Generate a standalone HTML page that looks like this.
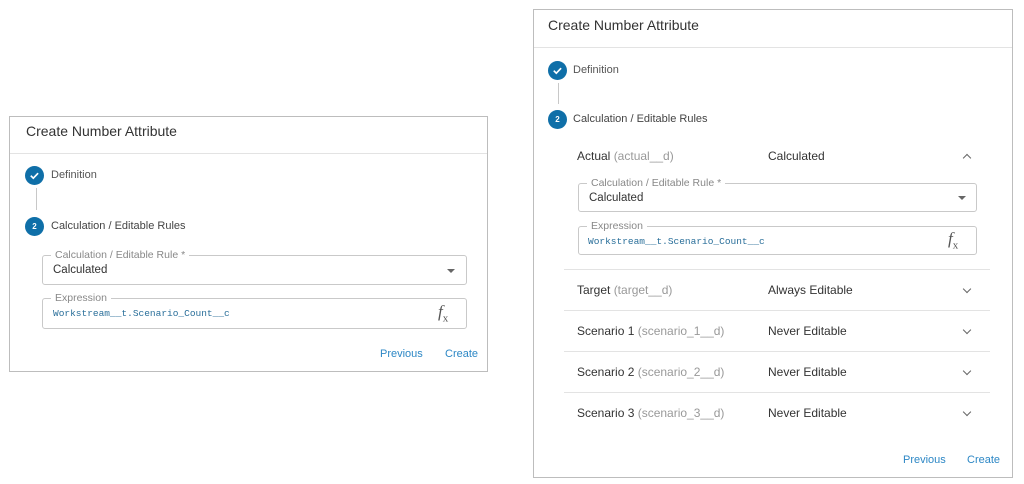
<!DOCTYPE html>
<html><head><meta charset="utf-8"><style>
body{margin:0;width:1024px;height:484px;background:#fff;position:relative;overflow:hidden;font-family:"Liberation Sans",sans-serif;color:#333}
.a{position:absolute;white-space:nowrap;line-height:16px}
.box{position:absolute;border:1px solid #bdbdbd;background:#fff;box-sizing:border-box}
.hr{position:absolute;height:1px;background:#e3e3e3}
.c{position:absolute;width:19px;height:19px;border-radius:50%;background:#0f6fa8;color:#fff;font-size:8px;text-align:center;line-height:19px;font-weight:bold}
.vl{position:absolute;width:1px;background:#c8c8c8}
.fld{position:absolute;border:1px solid #c9c9c9;border-radius:3px;box-sizing:border-box}
.lbl{position:absolute;top:-8px;left:8px;background:#fff;padding:0 4px;font-size:10.5px;color:#888;line-height:14px}
.mono{font-family:"Liberation Mono",monospace;font-size:9.5px;color:#2a6f9a}
.blue{color:#2c87c5;font-size:11px}
.fx{position:absolute;font-family:"Liberation Serif",serif;font-style:italic;font-size:17px;color:#555}
.gr{color:#999}
.chev{position:absolute;width:5px;height:5px;border-right:1.4px solid #666;border-bottom:1.4px solid #666}
.tri{position:absolute;width:0;height:0;border-left:4px solid transparent;border-right:4px solid transparent;border-top:4px solid #666}
</style></head><body>

<!-- Left panel -->
<div class="box" style="left:9px;top:116px;width:479px;height:256px"></div>
<div class="hr" style="left:10px;top:153px;width:477px"></div>
<div class="a" style="left:26px;top:123px;font-size:14px">Create Number Attribute</div>
<div class="c" style="left:25px;top:166px"><svg width="19" height="19"><path d="M5.8 9.7l2.5 2.5 4.8-5" stroke="#fff" stroke-width="1.7" fill="none"/></svg></div>
<div class="a" style="left:51px;top:167px;font-size:11px;color:#555">Definition</div>
<div class="vl" style="left:36px;top:188px;height:22px"></div>
<div class="c" style="left:25px;top:217px">2</div>
<div class="a" style="left:51px;top:218px;font-size:11px;color:#444">Calculation / Editable Rules</div>
<div class="fld" style="left:42px;top:255px;width:425px;height:30px"><div class="lbl">Calculation / Editable Rule *</div>
<div class="a" style="left:10px;top:6px;font-size:11.5px">Calculated</div><div class="tri" style="left:404px;top:13px"></div></div>
<div class="fld" style="left:42px;top:298px;width:425px;height:31px"><div class="lbl">Expression</div>
<div class="a mono" style="left:10px;top:7px">Workstream__t.Scenario_Count__c</div><div class="fx" style="left:395px;top:3px">f<sub style="font-size:11px;font-style:normal">x</sub></div></div>
<div class="a blue" style="left:380px;top:346px">Previous</div>
<div class="a blue" style="left:445px;top:346px">Create</div>

<!-- Right panel -->
<div class="box" style="left:533px;top:9px;width:480px;height:469px"></div>
<div class="hr" style="left:534px;top:47px;width:478px"></div>
<div class="a" style="left:548px;top:17px;font-size:14px">Create Number Attribute</div>
<div class="c" style="left:548px;top:61px"><svg width="19" height="19"><path d="M5.8 9.7l2.5 2.5 4.8-5" stroke="#fff" stroke-width="1.7" fill="none"/></svg></div>
<div class="a" style="left:573px;top:62px;font-size:11px;color:#555">Definition</div>
<div class="vl" style="left:558px;top:83px;height:21px"></div>
<div class="c" style="left:548px;top:110px">2</div>
<div class="a" style="left:573px;top:111px;font-size:11px;color:#444">Calculation / Editable Rules</div>

<div class="a" style="left:577px;top:148px;font-size:12px">Actual <span class="gr">(actual__d)</span></div>
<div class="a" style="left:768px;top:148px;font-size:12px">Calculated</div>
<div class="chev" style="left:964px;top:155px;transform:rotate(-135deg)"></div>
<div class="fld" style="left:578px;top:183px;width:399px;height:29px"><div class="lbl">Calculation / Editable Rule *</div>
<div class="a" style="left:10px;top:6px;font-size:11.5px">Calculated</div><div class="tri" style="left:379px;top:12px"></div></div>
<div class="fld" style="left:578px;top:226px;width:399px;height:29px"><div class="lbl">Expression</div>
<div class="a mono" style="left:9px;top:7px">Workstream__t.Scenario_Count__c</div><div class="fx" style="left:369px;top:2px">f<sub style="font-size:11px;font-style:normal">x</sub></div></div>

<div class="hr" style="left:564px;top:269px;width:426px"></div>
<div class="a" style="left:577px;top:282px;font-size:12px">Target <span class="gr">(target__d)</span></div>
<div class="a" style="left:768px;top:282px;font-size:12px">Always Editable</div>
<div class="chev" style="left:964px;top:286px;transform:rotate(45deg)"></div>
<div class="hr" style="left:564px;top:310px;width:426px"></div>
<div class="a" style="left:577px;top:323px;font-size:12px">Scenario 1 <span class="gr">(scenario_1__d)</span></div>
<div class="a" style="left:768px;top:323px;font-size:12px">Never Editable</div>
<div class="chev" style="left:964px;top:327px;transform:rotate(45deg)"></div>
<div class="hr" style="left:564px;top:351px;width:426px"></div>
<div class="a" style="left:577px;top:364px;font-size:12px">Scenario 2 <span class="gr">(scenario_2__d)</span></div>
<div class="a" style="left:768px;top:364px;font-size:12px">Never Editable</div>
<div class="chev" style="left:964px;top:368px;transform:rotate(45deg)"></div>
<div class="hr" style="left:564px;top:392px;width:426px"></div>
<div class="a" style="left:577px;top:405px;font-size:12px">Scenario 3 <span class="gr">(scenario_3__d)</span></div>
<div class="a" style="left:768px;top:405px;font-size:12px">Never Editable</div>
<div class="chev" style="left:964px;top:409px;transform:rotate(45deg)"></div>

<div class="a blue" style="left:903px;top:452px">Previous</div>
<div class="a blue" style="left:967px;top:452px">Create</div>
</body></html>
